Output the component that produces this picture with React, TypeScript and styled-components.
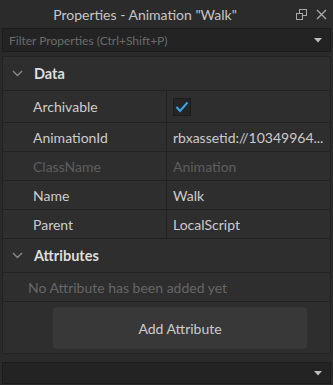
import styled, { createGlobalStyle } from "styled-components";

const GlobalStyle = createGlobalStyle`
  html, body {
    margin: 0;
    padding: 0;
    background-color: #2a2a2a;
    font-family: Lato, "Open Sans", sans-serif;
  }
`;

const Window = styled.div`
  width: 333px;
  height: 385px;
  display: flex;
  flex-direction: column;
  background-color: #2a2a2a;
  overflow: hidden;
`;

const TitleBar = styled.div`
  height: 28px;
  display: flex;
  align-items: center;
  background-color: #2b2b2b;
  padding: 0 6px 0 0;
`;

const Title = styled.div`
  flex: 1;
  text-align: center;
  padding-right: 6px;
  color: #c6c6c6;
  font-size: 14px;
`;

const TitleIcons = styled.div`
  display: flex;
  gap: 9px;
  align-items: center;
`;

interface IInputBox {
  small?: boolean;
}

const InputBox = styled.div<IInputBox>`
  height: ${(props) => (props.small ? "20px" : "22px")};
  margin: 0 2px;
  display: flex;
  align-items: center;
  justify-content: space-between;
  padding: 0 8px 0 6px;
  background-color: #232323;
  border: 1px solid #1b1b1b;
  color: #6c6c6c;
  font-size: 12px;
`;

const Panel = styled.div`
  margin: 4px 2px 8px 2px;
  border: 1px solid #222222;
  background-color: #2e2e2e;
  display: flex;
  flex-direction: column;
`;

const SectionHeader = styled.div`
  height: 33px;
  display: flex;
  align-items: center;
  gap: 11px;
  padding-left: 9px;
  border-bottom: 1px solid #222222;
  color: #dedede;
  font-weight: bold;
  font-size: 14.5px;
`;

interface IRow {
  tall?: boolean;
}

const Row = styled.div<IRow>`
  display: grid;
  grid-template-columns: 164px 1fr;
  height: ${(props) => (props.tall ? "31px" : "28px")};
  border-bottom: 1px solid #222222;
  font-size: 14px;
`;

interface ICell {
  disabled?: boolean;
}

const NameCell = styled.div<ICell>`
  display: flex;
  align-items: center;
  padding-left: 30px;
  border-right: 1px solid #222222;
  color: ${(props) => (props.disabled ? "#5e5e5e" : "#cccccc")};
`;

const ValueCell = styled.div<ICell>`
  display: flex;
  align-items: center;
  padding-left: 6px;
  white-space: nowrap;
  overflow: hidden;
  color: ${(props) => (props.disabled ? "#5e5e5e" : "#cccccc")};
`;

const Checkbox = styled.div`
  width: 16px;
  height: 16px;
  background-color: #252525;
  border: 1px solid #1c1c1c;
  display: flex;
  align-items: center;
  justify-content: center;
`;

const EmptyNote = styled.div`
  height: 28px;
  display: flex;
  align-items: center;
  padding-left: 25px;
  border-bottom: 1px solid #222222;
  color: #666666;
  font-size: 14px;
`;

const ButtonRow = styled.div`
  padding: 5px 23px 4px 50px;
`;

const Button = styled.button`
  width: 100%;
  height: 42px;
  border: none;
  border-radius: 4px;
  background-color: #383838;
  color: #cccccc;
  font-family: inherit;
  font-size: 14px;
`;

const Chevron = () => (
  <svg width="11" height="7" viewBox="0 0 11 7">
    <path d="M1 1 L5.5 5.5 L10 1" fill="none" stroke="#8a8a8a" strokeWidth="1.4" />
  </svg>
);

const Arrow = () => (
  <svg width="8" height="5" viewBox="0 0 8 5">
    <path d="M0 0 H8 L4 4.5 Z" fill="#bdbdbd" />
  </svg>
);

const App = () => {
  return (
    <Window>
      <GlobalStyle />
      <TitleBar>
        <Title>Properties - Animation "Walk"</Title>
        <TitleIcons>
          <svg width="11" height="11" viewBox="0 0 11 11">
            <rect x="3.5" y="0.5" width="7" height="6" fill="none" stroke="#a8a8a8" />
            <rect x="0.5" y="4.5" width="6" height="6" fill="#2b2b2b" stroke="#a8a8a8" />
          </svg>
          <svg width="11" height="11" viewBox="0 0 11 11">
            <path d="M1 1 L10 10 M10 1 L1 10" stroke="#a8a8a8" strokeWidth="1.4" />
          </svg>
        </TitleIcons>
      </TitleBar>
      <InputBox>
        <span>Filter Properties (Ctrl+Shift+P)</span>
        <Arrow />
      </InputBox>
      <Panel>
        <SectionHeader>
          <Chevron />
          Data
        </SectionHeader>
        <Row tall>
          <NameCell>Archivable</NameCell>
          <ValueCell>
            <Checkbox>
              <svg width="14" height="12" viewBox="0 0 14 12">
                <path d="M1.5 6 L5 10 L12.5 1.5" fill="none" stroke="#3ba6ea" strokeWidth="2" />
              </svg>
            </Checkbox>
          </ValueCell>
        </Row>
        <Row>
          <NameCell>AnimationId</NameCell>
          <ValueCell>rbxassetid://10349964...</ValueCell>
        </Row>
        <Row>
          <NameCell disabled>ClassName</NameCell>
          <ValueCell disabled>Animation</ValueCell>
        </Row>
        <Row>
          <NameCell>Name</NameCell>
          <ValueCell>Walk</ValueCell>
        </Row>
        <Row>
          <NameCell>Parent</NameCell>
          <ValueCell>LocalScript</ValueCell>
        </Row>
        <SectionHeader>
          <Chevron />
          Attributes
        </SectionHeader>
        <EmptyNote>No Attribute has been added yet</EmptyNote>
        <ButtonRow>
          <Button>Add Attribute</Button>
        </ButtonRow>
      </Panel>
      <InputBox small>
        <span />
        <Arrow />
      </InputBox>
    </Window>
  );
};

export default App;
